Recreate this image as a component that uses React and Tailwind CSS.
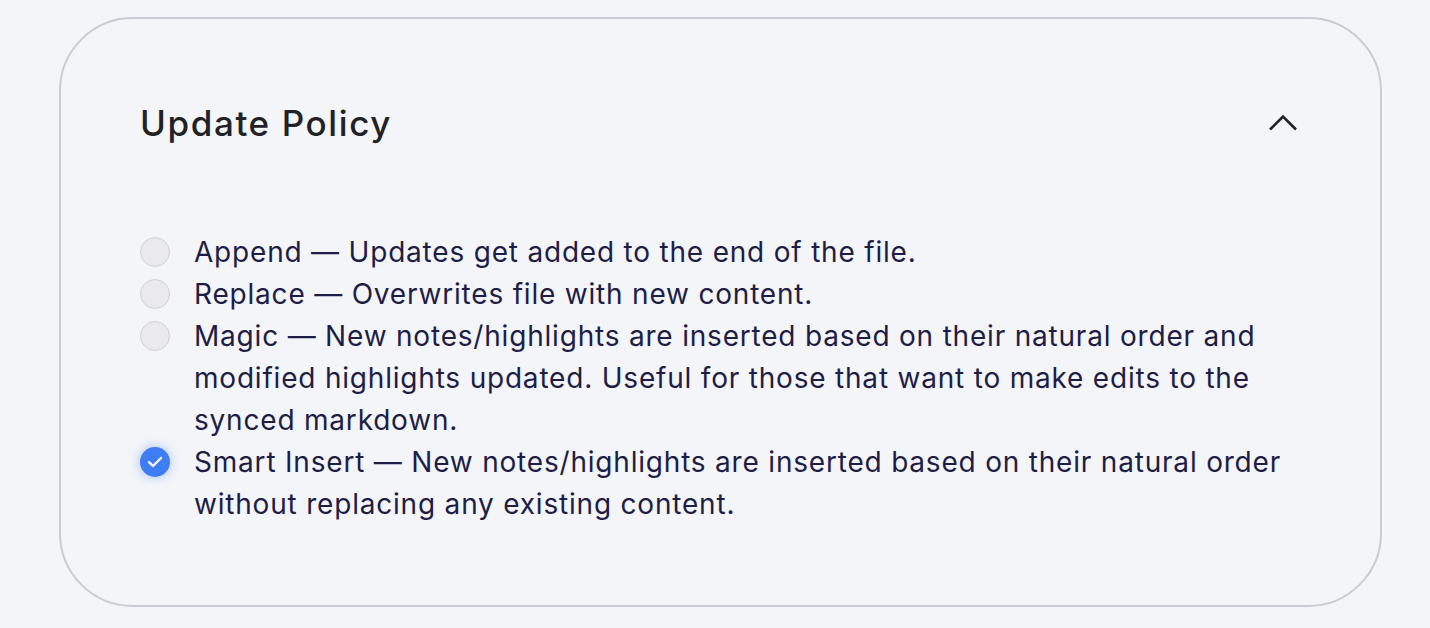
import React from "react";

const items = [
  { label: "Append — Updates get added to the end of the file.", checked: false },
  { label: "Replace — Overwrites file with new content.", checked: false },
  {
    label:
      "Magic — New notes/highlights are inserted based on their natural order and modified highlights updated. Useful for those that want to make edits to the synced markdown.",
    checked: false,
  },
  {
    label:
      "Smart Insert — New notes/highlights are inserted based on their natural order without replacing any existing content.",
    checked: true,
  },
];

function Radio({ checked }) {
  if (checked) {
    return (
      <span className="flex h-[30px] w-[30px] shrink-0 items-center justify-center rounded-full bg-[#3f7df5] shadow-[0_0_10px_2px_rgba(63,125,245,0.3)]">
        <svg width="16" height="12" viewBox="0 0 16 12" fill="none">
          <path d="M2 6.2 L6 10 L14 2" stroke="white" strokeWidth="2.4" strokeLinecap="round" strokeLinejoin="round" />
        </svg>
      </span>
    );
  }
  return <span className="h-[30px] w-[30px] shrink-0 rounded-full border border-[#d0d0d8] bg-[#e9e9ee]" />;
}

export default function App() {
  return (
    <div className="min-h-[628px] w-[1430px] bg-[#f4f5f9] pl-[59px] pt-[17px]" style={{ fontFamily: "Inter, 'Open Sans', sans-serif" }}>
      <div className="h-[590px] w-[1323px] rounded-[74px] border-2 border-[#cbcbd6] pl-[79px] pr-[82px] pt-[79px]">
        <div className="flex items-center justify-between">
          <h2 className="text-[35px] font-medium leading-[50px] tracking-[1.6px] text-[#222226]">Update Policy</h2>
          <svg width="30" height="18" viewBox="0 0 30 18" fill="none">
            <path d="M2 15.5 L15 2.5 L28 15.5" stroke="#222" strokeWidth="2.6" />
          </svg>
        </div>
        <div className="mt-[83px] flex flex-col">
          {items.map((it, i) => (
            <div key={i} className="flex items-start gap-[24px]">
              <div className="flex h-[42px] items-center">
                <Radio checked={it.checked} />
              </div>
              <p className="text-[28px] leading-[42px] tracking-[0.8px] text-[#1e1d45]">{it.label}</p>
            </div>
          ))}
        </div>
      </div>
    </div>
  );
}
